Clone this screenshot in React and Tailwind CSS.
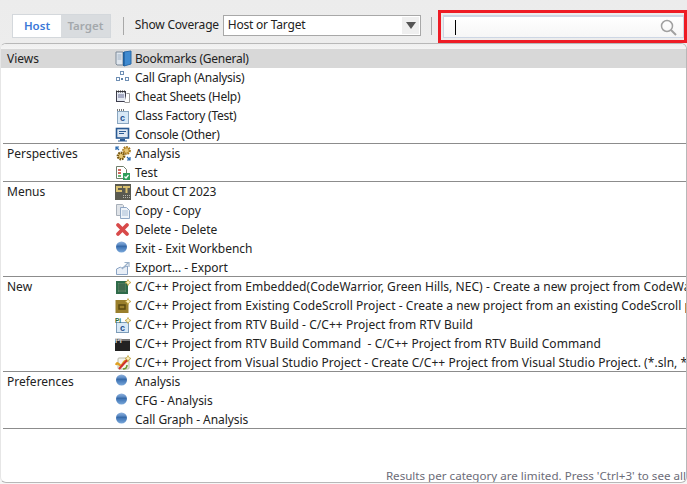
const Orb = () => (
  <svg width="16" height="16" viewBox="0 0 16 16"><defs><linearGradient id="orb" x1="0" y1="0" x2="0" y2="1"><stop offset="0" stopColor="#8fb2de"/><stop offset="0.5" stopColor="#3f74b5"/><stop offset="1" stopColor="#7aa8da"/></linearGradient></defs><circle cx="6.500" cy="6" r="5.500" fill="url(#orb)"/><path d="M1.500 5.200h10" stroke="#2f5f9c" strokeWidth=".8"/></svg>
);
const Book = () => (
  <svg width="18" height="18" viewBox="0 0 18 18"><path d="M1 2h7v13H2l-1-1z" fill="#dfe6ee" stroke="#7e8b99"/><path d="M2.500 5h4M2.500 7h4M2.500 9h4" stroke="#9fb0c2"/><path d="M9 2l7-1v13l-7 2z" fill="#3f8ad0" stroke="#2a6aa8"/><path d="M8 2h1.500v14H8z" fill="#1f5f9c"/></svg>
);
const Graph = () => (
  <svg width="16" height="16" viewBox="0 0 16 16" fill="#fff" stroke="#6f8fb4"><rect x="5.500" y="1.500" width="3" height="3"/><rect x="1.500" y="7.500" width="3" height="3"/><rect x="10.500" y="7.500" width="3" height="3"/><rect x="6" y="8" width="2" height="2" fill="#5c7fa6" stroke="none"/></svg>
);
const Sheets = () => (
  <svg width="16" height="16" viewBox="0 0 16 16"><rect x="1.500" y="2.500" width="9" height="10" fill="#e4e9f2" stroke="#3c3c4c"/><path d="M1 2.500h10" stroke="#333" strokeDasharray="1 1" strokeWidth="2"/><path d="M3 6h6M3 8h6" stroke="#6a6f96"/><path d="M11.500 4.500h3v9h-5" fill="#fff" stroke="#9a9a9a"/></svg>
);
const Factory = () => (
  <svg width="16" height="18" viewBox="0 0 16 18"><path d="M2 2h1v2h1V2h1v2h1V2h1v2h1V2h1v3H2z" fill="#777"/><rect x="2.500" y="4.500" width="11" height="12" fill="#d8e8f6" stroke="#8aa6c0"/><text x="5" y="14" fontSize="9" fontWeight="700" fill="#1f4f8f" fontFamily="Liberation Sans">c</text></svg>
);
const Console = () => (
  <svg width="16" height="16" viewBox="0 0 16 16"><rect x="1.500" y="1.500" width="12" height="9.500" fill="#dfe8f2" stroke="#2a5a93" strokeWidth="1.600"/><path d="M4 4.500h7M4 6.500h5" stroke="#2a5a93"/><path d="M5 12h5v1.500H5zM3 13.500h9v1H3z" fill="#2a5a93"/></svg>
);
const Gears = () => (
  <svg width="18" height="16" viewBox="0 0 18 16"><circle cx="11.500" cy="4.500" r="3.200" fill="#e8c878" stroke="#a8781c" strokeWidth="2.400" strokeDasharray="1.600 .8"/><circle cx="6" cy="10" r="3.200" fill="#e8c878" stroke="#7a5a14" strokeWidth="2.400" strokeDasharray="1.600 .8"/><path d="M1 1l3 3M1 4V1h3M15 14l-3-3M15 11v3h-3" stroke="#2a6ab0" strokeWidth="1.200" fill="none"/></svg>
);
const TestP = () => (
  <svg width="16" height="16" viewBox="0 0 16 16"><path d="M1.500 1.500h7l3 3v9h-10z" fill="#fff" stroke="#6f7f6a"/><path d="M3 5h3M3 8h3" stroke="#c0392b" strokeWidth="1.600"/><path d="M3 11h3" stroke="#3a9a4a" strokeWidth="1.600"/><rect x="8" y="8" width="7" height="7" fill="#2f9e5a"/><path d="M9.500 11.500l1.500 1.500 2.500-3" stroke="#fff" fill="none" strokeWidth="1.200"/></svg>
);
const About = () => (
  <svg width="16" height="16" viewBox="0 0 16 16"><rect width="16" height="16" fill="#5a5a50"/><path d="M1 2h6v2H3v2h4v2H1zM8 2h7v2h-2.500v5h-2V4H8z" fill="#d8c070"/><path d="M8 11h1v1H8zM10 11h1v1h-1zM12 11h1v1h-1zM14 11h1v1h-1zM8 13h1v1H8zM10 13h1v1h-1zM12 13h1v1h-1zM14 13h1v1h-1z" fill="#b8b8b0"/></svg>
);
const Copy = () => (
  <svg width="16" height="16" viewBox="0 0 16 16"><path d="M1.500 1.500h6l1 1v10h-7z" fill="#dfe3e8" stroke="#a8b0ba"/><path d="M5.500 4.500h6l3 3v8h-9z" fill="#eef3f9" stroke="#8fa6c4"/><path d="M7 8h6M7 10h6M7 12h6" stroke="#a8bcd4"/></svg>
);
const Del = () => (
  <svg width="16" height="16" viewBox="0 0 16 16"><path d="M3 3l9 9M12 3l-9 9" stroke="#d84a4a" strokeWidth="3.800" strokeLinecap="round"/></svg>
);
const Export = () => (
  <svg width="16" height="16" viewBox="0 0 16 16"><path d="M1.500 9l4-2 1 1 6-2v8.500h-11z" fill="#e8eef6" stroke="#8ba4c4"/><path d="M7 9l6-6M9.500 2.500H14V7" stroke="#9ab0c8" fill="none" strokeWidth="1.200"/></svg>
);
const Star = () => <path d="M13 .5l1 2 2 1-2 1-1 2-1-2-2-1 2-1z" fill="#fff3c0" stroke="#b89a30" strokeWidth=".7"/>;
const Chip = () => (
  <svg width="16" height="16" viewBox="0 0 16 16"><rect x="1" y="2" width="12" height="13" fill="#2f6b4a"/><path d="M3 4h8v9H3z" fill="#5a8a68"/><path d="M3 6h8M3 8h8M3 10h8M5 4v9M7 4v9M9 4v9" stroke="#2a4a38" strokeWidth=".6"/><Star/></svg>
);
const Existing = () => (
  <svg width="16" height="16" viewBox="0 0 16 16"><rect x="0.500" y="2" width="13" height="13" fill="#9a7f2c"/><path d="M4 7h6v4H4z" fill="none" stroke="#5a4a10" strokeWidth="1.500"/><Star/></svg>
);
const Rtv = () => (
  <svg width="16" height="16" viewBox="0 0 16 16"><rect x="1.500" y="5.500" width="12" height="10" fill="#d8e8f6" stroke="#7d9cb8"/><text x="0" y="6" fontSize="6.500" fontWeight="700" fill="#2a6a3a" fontFamily="Liberation Sans">Pi</text><text x="5" y="14" fontSize="9" fontWeight="700" fill="#1f4f8f" fontFamily="Liberation Sans">c</text><Star/></svg>
);
const RtvCmd = () => (
  <svg width="16" height="16" viewBox="0 0 16 16"><rect x="0" y="3" width="15" height="12" fill="#222"/><rect x="0" y="3" width="15" height="2" fill="#777"/><text x="0" y="7" fontSize="7" fontWeight="700" fill="#fff" stroke="#333" strokeWidth=".2" fontFamily="Liberation Sans">Pi</text></svg>
);
const Vs = () => (
  <svg width="17" height="16" viewBox="0 0 17 16"><rect x="3" y="3" width="11" height="11" rx="1" fill="#f4f4ec" stroke="#b8b8a8"/><path d="M1 10c2-5 4 3 6 0s3-5 6-4" stroke="#e0a020" strokeWidth="2.400" fill="none"/><path d="M4 14L14 3" stroke="#d03030" strokeWidth="2"/><path d="M8 14c2 0 4-1 4-4" stroke="#6a9a30" strokeWidth="1.600" fill="none"/><Star/></svg>
);

const groups = [
  ["Views", "tracking-[-0.25px]", [[Book, "Bookmarks (General)", true], [Graph, "Call Graph (Analysis)"], [Sheets, "Cheat Sheets (Help)"], [Factory, "Class Factory (Test)"], [Console, "Console (Other)"]]],
  ["Perspectives", "tracking-[-0.05px]", [[Gears, "Analysis"], [TestP, "Test"]]],
  ["Menus", "tracking-[-0.05px]", [[About, "About CT 2023"], [Copy, "Copy - Copy"], [Del, "Delete - Delete"], [Orb, "Exit - Exit Workbench"], [Export, "Export... - Export"]]],
  ["New", "tracking-[0.05px]", [
    [Chip, "C/C++ Project from Embedded(CodeWarrior, Green Hills, NEC) - Create a new project from CodeWarrior, Green Hills, NEC"],
    [Existing, "C/C++ Project from Existing CodeScroll Project - Create a new project from an existing CodeScroll project"],
    [Rtv, "C/C++ Project from RTV Build - C/C++ Project from RTV Build"],
    [RtvCmd, "C/C++ Project from RTV Build Command  - C/C++ Project from RTV Build Command"],
    [Vs, "C/C++ Project from Visual Studio Project - Create C/C++ Project from Visual Studio Project. (*.sln, *.vcxproj)"],
  ]],
  ["Preferences", "tracking-[-0.05px]", [[Orb, "Analysis"], [Orb, "CFG - Analysis"], [Orb, "Call Graph - Analysis"]]],
];

export default function App() {
  return (
    <div className="w-[687px] h-[484px] overflow-hidden flex flex-col bg-gradient-to-b from-[#ececec] to-[#f6f6f6] text-[12px] text-[#222] font-['Noto_Sans',sans-serif]">
      <div className="h-[43px] shrink-0 flex items-start pl-3">
        <div className="mt-[14px] w-[99px] h-[24px] flex border border-[#d4d8dc] bg-white font-semibold leading-[22px] text-center">
          <div className="w-[48px] text-[#3b78d8] text-[11.5px]">Host</div>
          <div className="flex-1 bg-[#d9dcdf] text-[#a4a8ac] text-[11.5px]">Target</div>
        </div>
        <div className="ml-[12px] mt-[17px] w-px h-[18px] bg-[#a8a8a8]" />
        <div className="ml-[11px] mt-[15px] w-[88px] leading-[20px] whitespace-pre tracking-[-0.2px]">Show Coverage</div>
        <div className="mt-[15px] w-[199px] h-[21px] flex items-center justify-between border border-[#a8a8a8] bg-white pl-[4px] pr-px leading-[16px]">
          <span className="tracking-[-0.2px] -mt-[2px]">Host or Target</span>
          <span className="w-[17px] h-[17px] bg-[#efefef] flex items-center justify-center">
            <svg width="10" height="7" viewBox="0 0 10 7"><path d="M0 0h10L5 7z" fill="#555" /></svg>
          </span>
        </div>
        <div className="ml-[10px] mt-[17px] w-px h-[18px] bg-[#a8a8a8]" />
        <div className="ml-[6px] mt-[10px] w-[249px] h-[33px] border-[3px] border-[#ee1c25] pl-[2px] pt-[2px]">
          <div className="h-[23px] flex items-center justify-between border-t-2 border-x border-b border-[#cdd6e4] bg-gradient-to-b from-white to-[#f6f6f6] pl-[11px]">
            <span className="w-px h-[15px] bg-black" />
            <svg className="mr-[6px]" width="17" height="17" viewBox="0 0 17 17" fill="none" stroke="#a0a0a0"><circle cx="7" cy="7" r="5.500" strokeWidth="1.500"/><path d="M11 11l5 5" strokeWidth="2"/></svg>
          </div>
        </div>
      </div>
      <div className="relative flex-1 mb-[1px] border border-[#b8b8b8] border-l-[#e6e6e6] rounded-t-[6px] rounded-b-[6px] bg-white overflow-hidden flex flex-col">
        <div className="h-[5px] shrink-0 bg-gradient-to-b from-[#efefef] to-[#f4f4f4]" />
        {groups.map(([name, track, rows]) => (
          <div key={name}>
            {rows.map(([Icon, text, sel], i) => (
              <div key={text} className={`h-[19px] flex items-center whitespace-pre ${sel ? "bg-[#d8d8d8]" : ""}`}>
                <div className="w-[114px] shrink-0 pl-[6px]">{i === 0 ? name : ""}</div>
                <div className="w-[20px] h-[19px] shrink-0 flex items-center"><Icon /></div>
                <div className={track}>{text}</div>
              </div>
            ))}
            <div className="h-px -mt-px ml-[2px] bg-[#8c8c8c]" />
          </div>
        ))}
        <div className="mt-auto text-right text-[#6c6c78] text-[11.6px] leading-[12px] whitespace-pre">Results per category are limited. Press 'Ctrl+3' to see all</div>
      </div>
    </div>
  );
}
